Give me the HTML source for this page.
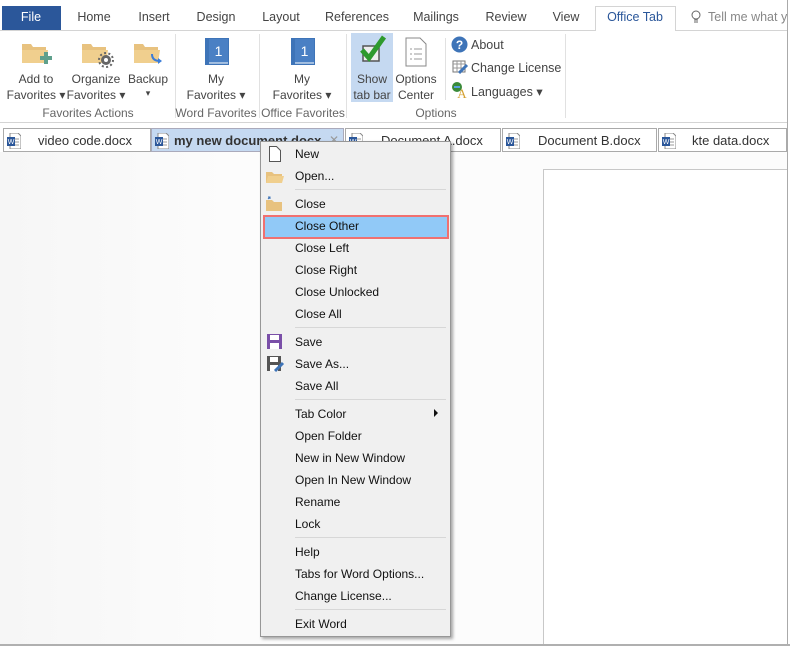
<!DOCTYPE html>
<html><head><meta charset="utf-8"><style>
*{margin:0;padding:0;box-sizing:border-box}
body{width:790px;height:646px;overflow:hidden;background:#fff;font-family:"Liberation Sans",sans-serif;font-size:12px;color:#444;position:relative}
.a{position:absolute;white-space:nowrap}
.c{transform:translateX(-50%)}
.tab{font-size:12.5px;color:#444;top:10px}
.sep{position:absolute;width:1px;background:#e1e1e1;top:34px;height:84px}
.glab{color:#666;top:106px}
.dt{position:absolute;top:128px;height:24px;border:1px solid #aaa;background:#fff;font-size:13px;color:#333}
.dt span{position:absolute;top:4px}
.wi{position:absolute;left:3px;top:4px;width:14px;height:16px}
.mi{position:absolute;left:34px;font-size:12px;color:#111}
.ms{position:absolute;left:34px;right:4px;height:1px;background:#d7d7d7}
</style></head><body>
<!-- ribbon tabs -->
<div class="a" style="left:2px;top:6px;width:59px;height:24px;background:#2b579a"></div>
<div class="a c" style="left:31px;top:10px;color:#fff;font-size:12.5px">File</div>
<div class="a c tab" style="left:94px">Home</div>
<div class="a c tab" style="left:154px">Insert</div>
<div class="a c tab" style="left:216px">Design</div>
<div class="a c tab" style="left:281px">Layout</div>
<div class="a c tab" style="left:357px">References</div>
<div class="a c tab" style="left:436px">Mailings</div>
<div class="a c tab" style="left:506px">Review</div>
<div class="a c tab" style="left:566px">View</div>
<div class="a" style="left:595px;top:6px;width:81px;height:25px;border:1px solid #d4d4d4;border-bottom:none;background:#fff"></div>
<div class="a c tab" style="left:635px;color:#2b579a">Office Tab</div>
<svg class="a" style="left:690px;top:10px" width="12" height="15"><circle cx="6" cy="5" r="4" fill="none" stroke="#666"/><path d="M4 10h4M4 12h4" stroke="#666"/></svg>
<div class="a tab" style="left:708px;color:#888">Tell me what yo</div>
<div class="a" style="left:0;top:30px;width:790px;height:1px;background:#d4d4d4"></div>
<div class="a" style="left:0;top:30px;width:676px;height:1px;background:#d4d4d4"></div>
<div class="a" style="left:596px;top:30px;width:79px;height:1px;background:#fff"></div>

<!-- ribbon content -->
<svg class="a" style="left:20px;top:40px" width="34" height="28"><path d="M2 4h9l2 3h13v4H2z" fill="#e8c27f"/><path d="M2 10h26l-2 13H2z" fill="#f0cf8e"/><path d="M20 16h4v-4h4v4h4v4h-4v4h-4v-4h-4z" fill="#5fa08c"/></svg>
<svg class="a" style="left:80px;top:40px" width="34" height="28"><path d="M2 4h9l2 3h13v4H2z" fill="#e8c27f"/><path d="M2 10h26l-2 13H2z" fill="#f0cf8e"/><circle cx="26" cy="20" r="5" fill="#666"/><circle cx="26" cy="20" r="7" fill="none" stroke="#666" stroke-width="2" stroke-dasharray="2 2.4"/><circle cx="26" cy="20" r="2" fill="#fff"/></svg>
<svg class="a" style="left:132px;top:40px" width="34" height="28"><path d="M2 4h9l2 3h13v4H2z" fill="#e8c27f"/><path d="M2 10h26l-2 13H2z" fill="#f0cf8e"/><path d="M20 14c0 5 3 7 8 7" fill="none" stroke="#3b7dd8" stroke-width="2"/><path d="M26 18l4 3-4 3z" fill="#3b7dd8"/></svg>
<div class="a c" style="left:36px;top:72px">Add to</div>
<div class="a c" style="left:36px;top:88px">Favorites ▾</div>
<div class="a c" style="left:96px;top:72px">Organize</div>
<div class="a c" style="left:96px;top:88px">Favorites ▾</div>
<div class="a c" style="left:148px;top:72px">Backup</div>
<div class="a c" style="left:148px;top:88px;font-size:9px">▾</div>
<div class="a c glab" style="left:88px">Favorites Actions</div>
<div class="sep" style="left:175px"></div>
<svg class="a" style="left:205px;top:38px" width="24" height="28"><rect x="0" y="0" width="24" height="27" fill="#3e74b8"/><rect x="4" y="1" width="19" height="24" fill="#4a80c4"/><path d="M4 25h19" stroke="#fff"/><text x="13.5" y="18" font-family="Liberation Sans" font-size="14" fill="#fff" text-anchor="middle">1</text></svg>
<div class="a c" style="left:216px;top:72px">My</div>
<div class="a c" style="left:216px;top:88px">Favorites ▾</div>
<div class="a c glab" style="left:216px">Word Favorites</div>
<div class="sep" style="left:259px"></div>
<svg class="a" style="left:291px;top:38px" width="24" height="28"><rect x="0" y="0" width="24" height="27" fill="#3e74b8"/><rect x="4" y="1" width="19" height="24" fill="#4a80c4"/><path d="M4 25h19" stroke="#fff"/><text x="13.5" y="18" font-family="Liberation Sans" font-size="14" fill="#fff" text-anchor="middle">1</text></svg>
<div class="a c" style="left:302px;top:72px">My</div>
<div class="a c" style="left:302px;top:88px">Favorites ▾</div>
<div class="a c glab" style="left:303px">Office Favorites</div>
<div class="sep" style="left:346px"></div>
<div class="a" style="left:351px;top:33px;width:42px;height:69px;background:#c5d9f1"></div>
<svg class="a" style="left:359px;top:34px" width="30" height="30"><rect x="4" y="12" width="16" height="15" fill="#eee" stroke="#555" stroke-width="1.5"/><path d="M3 16l7 8L25 3" fill="none" stroke="#2e9a2e" stroke-width="5"/></svg>
<div class="a c" style="left:372px;top:72px">Show</div>
<div class="a c" style="left:372px;top:88px">tab bar</div>
<svg class="a" style="left:404px;top:37px" width="24" height="30"><path d="M2 1h14l6 6v22H2z" fill="#fff" stroke="#888"/><path d="M6 12h2M10 12h8M6 17h2M10 17h8M6 22h2M10 22h8" stroke="#999"/></svg>
<div class="a c" style="left:416px;top:72px">Options</div>
<div class="a c" style="left:416px;top:88px">Center</div>
<div class="sep" style="left:445px;top:38px;height:62px"></div>
<svg class="a" style="left:451px;top:36px" width="17" height="17"><circle cx="8.5" cy="8.5" r="8" fill="#3e74b8"/><text x="8.5" y="13" font-family="Liberation Sans" font-weight="bold" font-size="12" fill="#fff" text-anchor="middle">?</text></svg>
<div class="a" style="left:471px;top:38px;font-size:12.5px">About</div>
<svg class="a" style="left:452px;top:59px" width="17" height="16"><rect x="1" y="2" width="12" height="11" fill="#fff" stroke="#777"/><path d="M1 5h12M5 2v11M9 2v11M1 9h12" stroke="#999"/><path d="M7 14l8-8" stroke="#3e74b8" stroke-width="3"/></svg>
<div class="a" style="left:471px;top:61px;font-size:12.5px">Change License</div>
<svg class="a" style="left:451px;top:81px" width="18" height="18"><circle cx="6" cy="6" r="5" fill="#3a8a3a"/><path d="M3 6h6" stroke="#5aa0e0" stroke-width="2"/><text x="11" y="17" font-family="Liberation Serif" font-size="13" fill="#d4a030" text-anchor="middle">A</text></svg>
<div class="a" style="left:471px;top:84px;font-size:12.5px">Languages ▾</div>
<div class="a c glab" style="left:436px">Options</div>
<div class="sep" style="left:565px"></div>
<div class="a" style="left:0;top:122px;width:790px;height:1px;background:#d4d4d4"></div>

<!-- document tabs -->
<div class="dt" style="left:3px;width:148px"><svg class="wi" viewBox="0 0 14 16"><path d="M3 0h8l3 3v13H3z" fill="#fff" stroke="#888"/><path d="M7 6h5M7 9h5M7 12h5" stroke="#999"/><rect x="0" y="4" width="8" height="9" fill="#2b579a"/><text x="4" y="11" font-size="7" fill="#fff" text-anchor="middle" font-family="Liberation Sans">W</text></svg><span style="left:34px">video code.docx</span></div>
<div class="dt" style="left:151px;width:193px;background:#c5d9f1;border-color:#aab"><svg class="wi" viewBox="0 0 14 16"><path d="M3 0h8l3 3v13H3z" fill="#fff" stroke="#888"/><path d="M7 6h5M7 9h5M7 12h5" stroke="#999"/><rect x="0" y="4" width="8" height="9" fill="#2b579a"/><text x="4" y="11" font-size="7" fill="#fff" text-anchor="middle" font-family="Liberation Sans">W</text></svg><span style="left:22px;font-weight:bold">my new document.docx</span><span style="left:177px;color:#999;font-size:12px">✕</span></div>
<div class="dt" style="left:345px;width:156px"><svg class="wi" viewBox="0 0 14 16"><path d="M3 0h8l3 3v13H3z" fill="#fff" stroke="#888"/><path d="M7 6h5M7 9h5M7 12h5" stroke="#999"/><rect x="0" y="4" width="8" height="9" fill="#2b579a"/><text x="4" y="11" font-size="7" fill="#fff" text-anchor="middle" font-family="Liberation Sans">W</text></svg><span style="left:35px">Document A.docx</span></div>
<div class="dt" style="left:502px;width:155px"><svg class="wi" viewBox="0 0 14 16"><path d="M3 0h8l3 3v13H3z" fill="#fff" stroke="#888"/><path d="M7 6h5M7 9h5M7 12h5" stroke="#999"/><rect x="0" y="4" width="8" height="9" fill="#2b579a"/><text x="4" y="11" font-size="7" fill="#fff" text-anchor="middle" font-family="Liberation Sans">W</text></svg><span style="left:35px">Document B.docx</span></div>
<div class="dt" style="left:658px;width:129px"><svg class="wi" viewBox="0 0 14 16"><path d="M3 0h8l3 3v13H3z" fill="#fff" stroke="#888"/><path d="M7 6h5M7 9h5M7 12h5" stroke="#999"/><rect x="0" y="4" width="8" height="9" fill="#2b579a"/><text x="4" y="11" font-size="7" fill="#fff" text-anchor="middle" font-family="Liberation Sans">W</text></svg><span style="left:33px">kte data.docx</span></div>

<!-- doc area -->
<div class="a" style="left:0;top:152px;width:787px;height:492px;background:linear-gradient(90deg,#f6f6f6,#fcfcfc 30%,#fcfcfc)"></div>
<div class="a" style="left:543px;top:169px;width:244px;height:475px;background:#fff;border:1px solid #c8c8c8;border-right:none;border-bottom:none"></div>
<div class="a" style="left:787px;top:0;width:3px;height:646px;background:#fff;border-left:1px solid #aaa"></div>
<div class="a" style="left:0;top:644px;width:790px;height:2px;background:#b0b0b0"></div>

<!-- context menu -->
<div class="a" style="left:260px;top:141px;width:191px;height:496px;background:#f0f0f0;border:1px solid #979797;box-shadow:2px 2px 3px rgba(0,0,0,.35)">
<div class="a" style="left:2px;top:73px;width:186px;height:24px;background:#91c9f7;border:2px solid #f07070"></div>
<svg class="a" style="left:8px;top:4px" width="12" height="16"><path d="M.5.5h7l4 4v11H.5z" fill="#fff" stroke="#555"/></svg>
<svg class="a" style="left:5px;top:28px" width="18" height="14"><path d="M0 2h6l2 2h8v9H0z" fill="#e8c27f"/><path d="M2 6h16l-2 7H0z" fill="#f0cf8e"/></svg>
<svg class="a" style="left:5px;top:54px" width="18" height="16"><path d="M0 4h6l2 2h8v9H0z" fill="#e8c27f"/><path d="M2 3l2-2M2 1h2v2" stroke="#3e74b8"/></svg>
<svg class="a" style="left:6px;top:192px" width="16" height="16"><rect x="0" y="0" width="15" height="15" fill="#7a4fa8"/><rect x="3" y="1" width="9" height="5" fill="#fff"/><rect x="3" y="9" width="9" height="6" fill="#fff"/></svg>
<svg class="a" style="left:6px;top:214px" width="18" height="17"><rect x="0" y="0" width="14" height="15" fill="#555"/><rect x="3" y="1" width="8" height="5" fill="#fff"/><rect x="3" y="9" width="8" height="6" fill="#fff"/><path d="M8 15l8-8" stroke="#3e74b8" stroke-width="3"/></svg>
<div class="mi" style="top:5px">New</div>
<div class="mi" style="top:27px">Open...</div>
<div class="ms" style="top:47px"></div>
<div class="mi" style="top:55px">Close</div>
<div class="mi" style="top:77px">Close Other</div>
<div class="mi" style="top:99px">Close Left</div>
<div class="mi" style="top:121px">Close Right</div>
<div class="mi" style="top:143px">Close Unlocked</div>
<div class="mi" style="top:165px">Close All</div>
<div class="ms" style="top:185px"></div>
<div class="mi" style="top:193px">Save</div>
<div class="mi" style="top:215px">Save As...</div>
<div class="mi" style="top:237px">Save All</div>
<div class="ms" style="top:257px"></div>
<div class="mi" style="top:265px">Tab Color</div>
<div class="a" style="left:173px;top:267px;width:0;height:0;border-left:4px solid #111;border-top:4px solid transparent;border-bottom:4px solid transparent"></div>
<div class="mi" style="top:287px">Open Folder</div>
<div class="mi" style="top:309px">New in New Window</div>
<div class="mi" style="top:331px">Open In New Window</div>
<div class="mi" style="top:353px">Rename</div>
<div class="mi" style="top:375px">Lock</div>
<div class="ms" style="top:395px"></div>
<div class="mi" style="top:403px">Help</div>
<div class="mi" style="top:425px">Tabs for Word Options...</div>
<div class="mi" style="top:447px">Change License...</div>
<div class="ms" style="top:467px"></div>
<div class="mi" style="top:475px">Exit Word</div>
</div>
</body></html>
